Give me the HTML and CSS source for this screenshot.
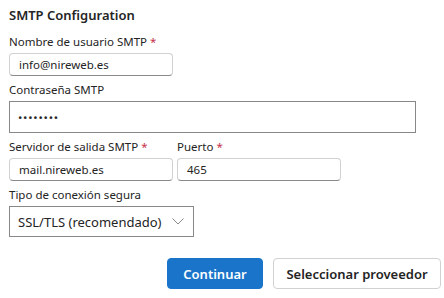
FILE: index.html
```html
<!DOCTYPE html>
<html lang="es">
<head>
    <meta charset="UTF-8">
    <title>SMTP Configuration</title>
    <link rel="stylesheet" href="styles.css">
</head>
<body>
    <div class="smtp-form">
        <h2 class="form-title">SMTP Configuration</h2>

        <div class="field">
            <label class="field-label">Nombre de usuario SMTP <span class="req">*</span></label>
            <input class="text-input w-short" type="text" value="info@nireweb.es">
        </div>

        <div class="field">
            <label class="field-label">Contraseña SMTP</label>
            <input class="text-input box-input w-full" type="password" value="12345678">
        </div>

        <div class="field-row">
            <div class="field">
                <label class="field-label">Servidor de salida SMTP <span class="req">*</span></label>
                <input class="text-input w-short" type="text" value="mail.nireweb.es">
            </div>
            <div class="field">
                <label class="field-label">Puerto <span class="req">*</span></label>
                <input class="text-input w-short" type="text" value="465">
            </div>
        </div>

        <div class="field">
            <label class="field-label">Tipo de conexión segura</label>
            <div class="dropdown">
                <span class="dropdown-value">SSL/TLS (recomendado)</span>
                <svg class="chevron" width="12" height="7" viewBox="0 0 12 7" fill="none" stroke="currentColor">
                    <path d="M0.5 0.5l5.5 5.5 5.5-5.5" stroke-width="1"></path>
                </svg>
            </div>
        </div>

        <div class="actions">
            <button class="btn btn-primary">Continuar</button>
            <button class="btn btn-default">Seleccionar proveedor</button>
        </div>
    </div>
</body>
</html>
```

FILE: styles.css
```css
* {
    box-sizing: border-box;
}

body {
    margin: 0;
    background: #ffffff;
    font-family: "Noto Sans", "Open Sans", sans-serif;
    color: #242424;
}

.smtp-form {
    padding: 7px 3px 0 9px;
}

.form-title {
    margin: 0 0 11px;
    font-size: 13px;
    line-height: 16px;
    font-weight: 600;
}

.field {
    display: flex;
    flex-direction: column;
    align-items: flex-start;
    margin-bottom: 6px;
}

.field-label {
    font-size: 11.5px;
    line-height: 16px;
    margin-bottom: 3px;
}

.req {
    color: #c4314b;
}

/* inputs */
.text-input {
    font-family: inherit;
    font-size: 11.5px;
    color: #242424;
    height: 23px;
    padding: 0 9px;
    border: 1px solid #d1d1d1;
    border-bottom-color: #8a8a8a;
    border-radius: 4px;
    background: #fff;
    outline: none;
}

.w-short {
    width: 164px;
}

.w-full {
    width: 407px;
}

.box-input {
    height: 32px;
    padding: 0 8px;
    border: 1px solid #8a8886;
    border-radius: 0;
    letter-spacing: 0.8px;
}

.field-row {
    display: flex;
    gap: 4px;
}

/* select */
.dropdown {
    display: flex;
    align-items: center;
    justify-content: space-between;
    width: 185px;
    height: 31px;
    padding: 0 9px 0 8px;
    border: 1px solid #8a8886;
    font-size: 13px;
    white-space: nowrap;
}

.chevron {
    color: #8a8a8a;
}

/* buttons */
.actions {
    display: flex;
    justify-content: flex-end;
    gap: 10px;
    margin-top: 21px;
}

.btn {
    height: 31px;
    padding: 0 8px;
    font-family: inherit;
    font-size: 13px;
    font-weight: 600;
    border-radius: 4px;
    cursor: pointer;
}

.btn-primary {
    width: 96px;
    background: #1a74c9;
    border: 1px solid #1a74c9;
    color: #fff;
}

.btn-default {
    width: 168px;
    background: #fff;
    border: 1px solid #d1d1d1;
    color: #242424;
}
```
